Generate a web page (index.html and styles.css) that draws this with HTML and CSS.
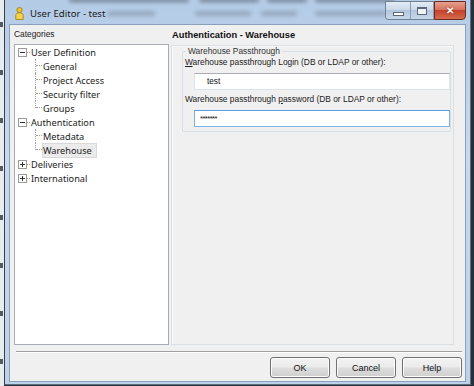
FILE: index.html
```html
<!DOCTYPE html>
<html lang="en">
<head>
  <meta charset="UTF-8">
  <title>User Editor - test</title>
  <link rel="stylesheet" href="styles.css">
</head>
<body>
  <div class="desk-strip">
    <span class="mark"></span><span class="mark"></span><span class="mark"></span><span class="mark"></span>
    <span class="mark"></span><span class="mark"></span><span class="mark"></span><span class="mark"></span>
  </div>

  <div class="window">
    <div class="titlebar">
      <div class="glass-blur">
        <span class="blob b1"></span><span class="blob b2"></span><span class="blob b3"></span><span class="blob b4"></span>
        <span class="blob b5"></span><span class="blob b6"></span><span class="blob b7"></span><span class="blob b8"></span>
      </div>
      <svg class="app-icon" width="9" height="13" viewBox="0 0 9 13">
        <circle cx="4.5" cy="3" r="2.6" fill="#f2c42c" stroke="#a07810" stroke-width="0.8"/>
        <path d="M0.8 12.5 V8.2 C0.8 6.6 2.2 5.8 4.5 5.8 C6.8 5.8 8.2 6.6 8.2 8.2 V12.5 Z" fill="#f6d34a" stroke="#a07810" stroke-width="0.8"/>
      </svg>
      <span class="title">User Editor - test</span>
      <div class="caption-buttons">
        <div class="cap-group">
          <div class="cap-btn"><span class="min-glyph"></span></div>
          <div class="cap-btn"><span class="max-glyph"></span></div>
        </div>
        <div class="cap-close">&#x2715;</div>
      </div>
    </div>

    <div class="client">
      <div class="main">
        <div class="categories">
          <div class="cat-label">Categories</div>
          <div class="tree">
            <div class="node root">
              <span class="exp minus"></span><span class="stub"></span><span class="text">User Definition</span>
            </div>
            <div class="node child">
              <span class="conn"><span class="h"></span></span><span class="text">General</span>
            </div>
            <div class="node child">
              <span class="conn"><span class="h"></span></span><span class="text">Project Access</span>
            </div>
            <div class="node child">
              <span class="conn"><span class="h"></span></span><span class="text">Security filter</span>
            </div>
            <div class="node child">
              <span class="conn last"><span class="h"></span></span><span class="text">Groups</span>
            </div>
            <div class="node root">
              <span class="exp minus"></span><span class="stub"></span><span class="text">Authentication</span>
            </div>
            <div class="node child">
              <span class="conn"><span class="h"></span></span><span class="text">Metadata</span>
            </div>
            <div class="node child">
              <span class="conn last"><span class="h"></span></span><span class="text selected">Warehouse</span>
            </div>
            <div class="node root">
              <span class="exp plus"></span><span class="stub"></span><span class="text">Deliveries</span>
            </div>
            <div class="node root">
              <span class="exp plus"></span><span class="stub"></span><span class="text">International</span>
            </div>
          </div>
        </div>

        <div class="details">
          <div class="details-title">Authentication - Warehouse</div>
          <div class="panel">
            <fieldset class="group">
              <legend>Warehouse Passthrough</legend>
              <div class="field-label"><u>W</u>arehouse passthrough Login (DB or LDAP or other):</div>
              <div class="textbox login">test</div>
              <div class="field-label">Warehouse passthrough <u>p</u>assword (DB or LDAP or other):</div>
              <div class="textbox pass focused">*******</div>
            </fieldset>
          </div>
        </div>
      </div>

      <div class="separator"></div>

      <div class="buttons">
        <button class="btn">OK</button>
        <button class="btn">Cancel</button>
        <button class="btn">Help</button>
      </div>
    </div>
  </div>
</body>
</html>
```

FILE: styles.css
```css
body {
  margin: 0;
  width: 474px;
  height: 386px;
  overflow: hidden;
  display: flex;
  background-color: #26303a;
  font-family: "Liberation Sans", Arial, sans-serif;
}

/* bit of the application behind the dialog */
.desk-strip {
  width: 4px;
  height: 386px;
  background-color: #e9ecef;
  border-right: 1px solid #3a3f45;
  display: flex;
  flex-direction: column;
  justify-content: space-around;
  overflow: hidden;
}
.desk-strip .mark {
  display: block;
  width: 3px;
  height: 5px;
  background-color: #555b62;
}

.window {
  width: 466px;
  height: 385px;
  display: flex;
  flex-direction: column;
  background: linear-gradient(180deg, #b4cbe6 0%, #c6d9ee 40%, #bcd2ea 100%);
  border-right: 1px solid #5d6d80;
  border-bottom: 1px solid #5d6d80;
  box-sizing: border-box;
  padding: 0 4px 4px 4px;
}

.titlebar {
  height: 24px;
  display: flex;
  align-items: center;
  position: relative;
  overflow: hidden;
  flex-shrink: 0;
}
.glass-blur {
  position: absolute;
  inset: 0 0 0 0;
}
.blob {
  position: absolute;
  background-color: #4a5562;
  filter: blur(2px);
  opacity: 0.65;
  border-radius: 2px;
}
.b1 { left: 60px;  top: -2px; width: 120px; height: 4px; }
.b2 { left: 190px; top: -2px; width: 60px;  height: 4px; }
.b3 { left: 258px; top: -2px; width: 40px;  height: 4px; }
.b4 { left: 306px; top: -2px; width: 80px;  height: 4px; }
.b5 { left: 98px;  top: 11px; width: 48px;  height: 5px; opacity: 0.3; }
.b6 { left: 186px; top: 11px; width: 56px;  height: 5px; opacity: 0.3; }
.b7 { left: 252px; top: 11px; width: 36px;  height: 5px; opacity: 0.3; }
.b8 { left: 306px; top: 11px; width: 72px;  height: 5px; opacity: 0.3; }

.app-icon {
  position: relative;
  margin-left: 6px;
  margin-top: 3px;
}
.title {
  position: relative;
  margin-left: 6px;
  margin-top: 2px;
  font-family: "Noto Sans", sans-serif;
  font-size: 9.6px;
  color: #1a1a1a;
}

.caption-buttons {
  position: relative;
  margin-left: auto;
  align-self: flex-start;
  display: flex;
  margin-top: 1px;
}
.cap-group {
  display: flex;
  height: 17px;
  border: 1px solid #6f8196;
  border-right: none;
  border-radius: 0 0 0 4px;
  overflow: hidden;
}
.cap-btn {
  width: 22px;
  display: flex;
  align-items: center;
  justify-content: center;
  background: linear-gradient(180deg, #e4ecf5 0%, #cbd9ea 45%, #b3c6dd 50%, #c9d8ea 100%);
  border-right: 1px solid #8b9bb0;
}
.cap-btn:first-child {
  width: 24px;
}
.min-glyph {
  width: 9px;
  height: 2px;
  margin-top: 6px;
  background-color: #fff;
  border: 1px solid #5a6878;
}
.max-glyph {
  width: 8px;
  height: 5px;
  border: 1px solid #5a6878;
  border-top-width: 2px;
  background-color: #eef3f8;
}
.cap-close {
  width: 30px;
  height: 17px;
  border: 1px solid #6b2a22;
  border-radius: 0 0 4px 0;
  background: linear-gradient(180deg, #e5a08f 0%, #d9735e 45%, #c4432c 50%, #d46a4c 100%);
  color: #fff;
  font-size: 10px;
  font-weight: bold;
  display: flex;
  align-items: center;
  justify-content: center;
  text-shadow: 0 0 2px #6b1a10;
}

.client {
  flex: 1;
  background-color: #f0f0f0;
  border: 1px solid #8aa0b8;
  display: flex;
  flex-direction: column;
  padding: 0 3px 3px 4px;
}

.main {
  display: flex;
  gap: 2px;
  height: 320px;
}

.categories {
  width: 155px;
  display: flex;
  flex-direction: column;
}
.cat-label {
  height: 19px;
  line-height: 17px;
  font-size: 8.4px;
  color: #222;
  padding-top: 1px;
  box-sizing: border-box;
}
.tree {
  flex: 1;
  background-color: #fff;
  border: 1px solid #a8acb3;
  font-family: "Noto Sans", sans-serif;
  font-size: 9.2px;
  color: #1c1c1c;
}
.node {
  height: 14px;
  display: flex;
  align-items: center;
}
.node.root {
  padding-left: 3px;
}
.node.child {
  padding-left: 20px;
}
.exp {
  width: 7px;
  height: 7px;
  border: 1px solid #9a9a9a;
  background-color: #fff;
  display: flex;
  align-items: center;
  justify-content: center;
  flex-shrink: 0;
}
.exp.minus::before {
  content: "";
  width: 5px;
  height: 1px;
  background-color: #333;
}
.exp.plus {
  background: linear-gradient(#333, #333) center / 5px 1px no-repeat,
              linear-gradient(#333, #333) center / 1px 5px no-repeat,
              #fff;
}
.stub {
  width: 3px;
  border-top: 1px dotted #a0a0a0;
}
.conn {
  width: 6px;
  height: 14px;
  border-left: 1px dotted #a0a0a0;
  align-self: flex-start;
  flex-shrink: 0;
}
.conn.last {
  height: 7px;
}
.conn .h {
  display: block;
  height: 7px;
  border-bottom: 1px dotted #a0a0a0;
  box-sizing: border-box;
}
.text {
  padding: 0 2px 0 0;
  line-height: 13px;
  white-space: nowrap;
  border: 1px solid transparent;
}
.text.selected {
  background-color: #ebebeb;
  border-color: #d9d9d9;
  padding-right: 4px;
}

.details {
  flex: 1;
  display: flex;
  flex-direction: column;
}
.details-title {
  height: 20px;
  line-height: 20px;
  padding-left: 1px;
  font-size: 9.3px;
  font-weight: bold;
  color: #111;
}
.panel {
  flex: 1;
  margin-right: 8px;
  border: 1px solid #dadfe3;
  box-shadow: inset 1px 1px 0 #fafafa;
  padding: 0 2px 0 10px;
}
.group {
  margin: 0;
  padding: 0 0 4px 2px;
  border: 1px solid #d5dfe5;
  border-radius: 2px;
  font-size: 8.4px;
  color: #222;
}
.group legend {
  padding: 0 2px;
  margin-left: 1px;
  line-height: 10px;
  color: #333;
}
.field-label {
  line-height: 11px;
  margin-top: 1px;
}
.textbox {
  height: 15px;
  margin: 5px 0 4px 9px;
  background-color: #fff;
  border: 1px solid #dde3ea;
  border-top-color: #abadb3;
  font-size: 8.2px;
  line-height: 15px;
  color: #111;
}
.textbox.login {
  padding-left: 12px;
}
.textbox.pass {
  padding-left: 5px;
  margin-bottom: 0;
  font-size: 7.5px;
  letter-spacing: -0.5px;
}
.textbox.focused {
  border-color: #7eb4ea;
  border-top-color: #569de5;
}

.separator {
  margin: 6px 0 0 2px;
  height: 0;
  border-top: 1px solid #a0a0a0;
  border-bottom: 1px solid #ffffff;
}

.buttons {
  display: flex;
  justify-content: flex-end;
  gap: 6px;
  margin-top: 4px;
}
.btn {
  width: 60px;
  height: 21px;
  padding: 0;
  border: 1px solid #707070;
  border-radius: 3px;
  background: linear-gradient(180deg, #f2f2f2 0%, #ebebeb 48%, #dddddd 52%, #cfcfcf 100%);
  box-shadow: inset 0 0 0 1px #fcfcfc;
  font-family: "Liberation Sans", Arial, sans-serif;
  font-size: 9px;
  color: #111;
}
```
